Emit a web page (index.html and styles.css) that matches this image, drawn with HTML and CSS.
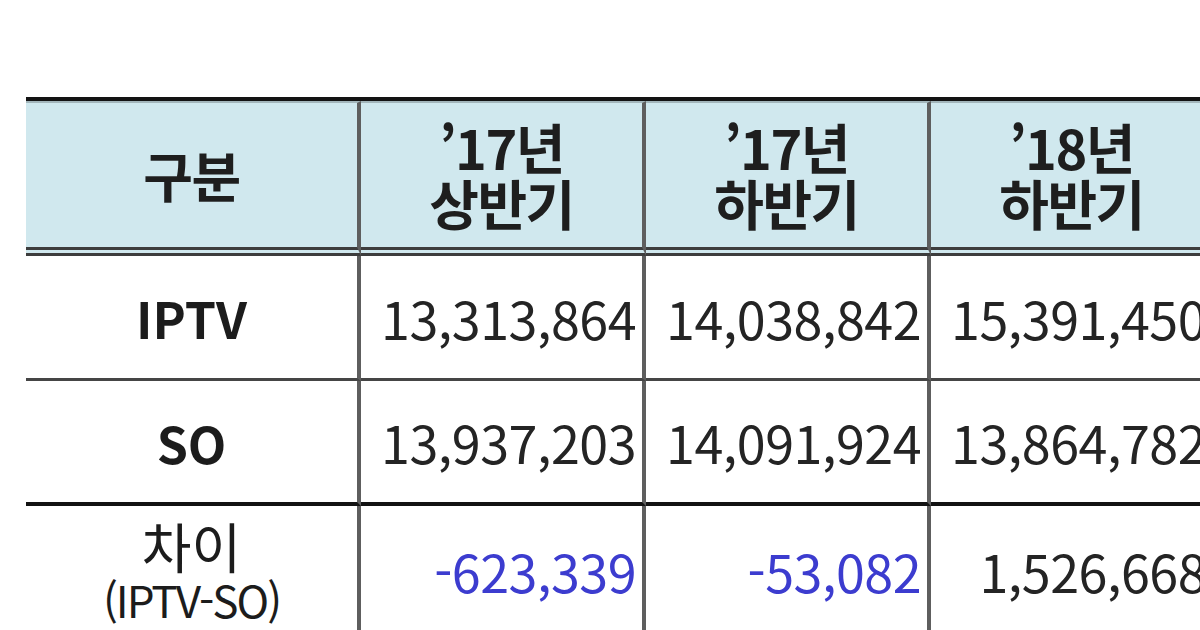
FILE: index.html
```html
<!DOCTYPE html>
<html lang="ko">
<head>
<meta charset="utf-8">
<title>IPTV SO 가입자 비교</title>
<link rel="stylesheet" href="styles.css">
</head>
<body>
<table class="stats">
  <thead>
    <tr>
      <th class="c1">구분</th>
      <th class="c2">’17년<br>상반기</th>
      <th class="c3">’17년<br>하반기</th>
      <th class="c4">’18년<br>하반기</th>
    </tr>
  </thead>
  <tbody>
    <tr class="r-iptv">
      <td class="label">IPTV</td>
      <td class="num">13,313,864</td>
      <td class="num">14,038,842</td>
      <td class="num">15,391,450</td>
    </tr>
    <tr class="r-so">
      <td class="label">SO</td>
      <td class="num">13,937,203</td>
      <td class="num">14,091,924</td>
      <td class="num">13,864,782</td>
    </tr>
    <tr class="r-diff">
      <td class="label diff"><span class="diff-main">차이</span><span class="diff-sub">(IPTV-SO)</span></td>
      <td class="num neg">-623,339</td>
      <td class="num neg">-53,082</td>
      <td class="num">1,526,668</td>
    </tr>
  </tbody>
</table>
</body>
</html>
```

FILE: styles.css
```css
html, body {
  margin: 0;
  padding: 0;
  background: #ffffff;
}

body {
  width: 1200px;
  height: 630px;
  overflow: hidden;
  font-family: "Noto Sans CJK KR", "Noto Sans", sans-serif;
  color: #1c1c1c;
}

.stats {
  margin: 97px 0 0 26px;
  width: 1186px;
  table-layout: fixed;
  border-collapse: separate;
  border-spacing: 0;
  border-top: 4px solid #131313;
}

.stats th,
.stats td {
  box-sizing: border-box;
  padding: 0;
  border-right: 4px solid #5e5e5e;
}

.stats th:last-child,
.stats td:last-child {
  border-right: none;
}

.c1 { width: 335px; }
.c2 { width: 285px; }
.c3 { width: 285px; }
.c4 { width: 281px; }

.stats th {
  height: 155px;
  background: #d0e8ee;
  border-top: 2px solid #a3b6bb;
  border-bottom: 9px double #3d3d3d;
  font-size: 54px;
  font-weight: 700;
  line-height: 56px;
  letter-spacing: -1.5px;
  text-align: center;
  vertical-align: middle;
  color: #1e1e1e;
}

.r-iptv td {
  height: 125px;
  border-bottom: 3px solid #454545;
}

.r-so td {
  height: 125px;
  border-bottom: 4px solid #121212;
}

.r-diff td {
  height: 128px;
}

.label {
  text-align: center;
  font-size: 50px;
  font-weight: 700;
}

.num {
  text-align: right;
  padding-right: 6px !important;
  font-size: 52px;
  font-weight: 400;
  letter-spacing: -0.5px;
  color: #242424;
}

.neg {
  color: #3c3ccf;
}

.diff {
  font-weight: 400;
}

.diff-main {
  display: block;
  font-size: 54px;
  line-height: 58px;
}

.diff-sub {
  display: block;
  font-size: 44px;
  line-height: 48px;
  letter-spacing: -2px;
}
```
